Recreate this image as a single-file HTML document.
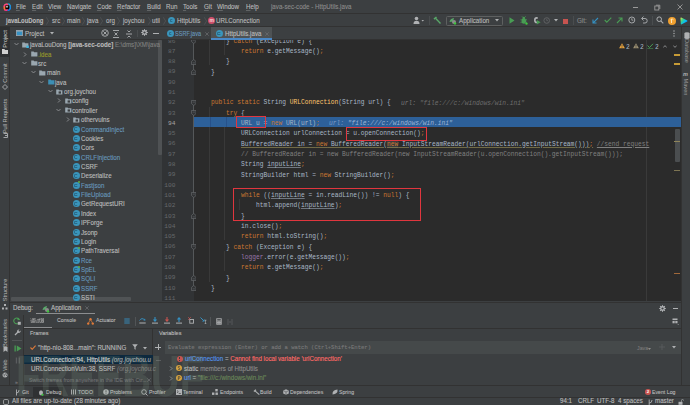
<!DOCTYPE html>
<html><head><meta charset="utf-8">
<style>
*{margin:0;padding:0;box-sizing:border-box}
html,body{width:690px;height:405px;overflow:hidden;background:#3c3f41;font-family:"Liberation Sans",sans-serif;color:#bbbbbb;font-size:6.2px}
.a{position:absolute;white-space:nowrap}
.mono{font-family:"Liberation Mono",monospace}
#menubar{left:0;top:0;width:690px;height:13px;background:#3c3f41}
#navbar{left:0;top:13px;width:690px;height:14px;background:#3c3f41;border-top:1px solid #323232;border-bottom:1px solid #323232}
#lstrip{left:0;top:27px;width:10px;height:358px;background:#3c3f41;border-right:1px solid #323232}
#proj{left:10px;top:27px;width:152px;height:275px;background:#3c3f41;overflow:hidden}
#tabs{left:162px;top:27px;width:519px;height:12.8px;background:#3c3f41;border-bottom:0.8px solid #323232;z-index:3}
#gutter{left:162px;top:39px;width:32px;height:262px;background:#313335}
#code{left:194px;top:39px;width:487px;height:262px;background:#2b2b2b;overflow:hidden}
#rstrip{left:681px;top:27px;width:9px;height:358px;background:#3c3f41;border-left:1px solid #323232}
#debug{left:10px;top:302px;width:671px;height:83px;background:#3c3f41;border-top:1px solid #323232}
#btools{left:0;top:385px;width:690px;height:12px;background:#3c3f41;border-top:1px solid #323232}
#status{left:0;top:397px;width:690px;height:8px;background:#3c3f41;border-top:1px solid #323232}
.mi{top:3px;line-height:7px;font-size:6.8px;transform:scaleX(0.91);transform-origin:0 0;-webkit-text-stroke:0.1px currentColor}
.nb{top:2.5px;line-height:7px;font-size:6.8px;transform:scaleX(0.91);transform-origin:0 0;-webkit-text-stroke:0.1px currentColor}
.nbs{top:2.5px;line-height:7px;color:#5e6060;font-size:6px}
.cicon{width:7px;height:7px;border-radius:50%;background:#3a95bb}
.cicon::after{content:"";position:absolute;left:1.8px;top:1.8px;width:3.4px;height:3.4px;border-radius:50%;border:0.7px solid #2a6a88;border-right-color:transparent;box-sizing:border-box}
u{text-decoration:underline;text-decoration-color:rgba(187,187,187,0.3);text-decoration-thickness:0.5px;text-underline-offset:0.5px}
.vt{display:flex;align-items:center;justify-content:center}
.vt span{display:block;transform:rotate(-90deg);font-size:5.6px;line-height:6px}
.tb{line-height:7px;font-size:6.2px;transform:scaleX(0.84);transform-origin:0 0;color:#bbbbbb;-webkit-text-stroke:0.1px currentColor}
.tr{line-height:7px;font-size:6.8px;transform:scaleX(0.91);transform-origin:0 0;-webkit-text-stroke:0.12px currentColor}
.code{font-family:"Liberation Mono",monospace;font-size:7px;line-height:10.3px;color:#a9b7c6;white-space:pre;transform:scaleX(0.8917);transform-origin:0 0;margin-top:1.2px}
.ln{font-family:"Liberation Mono",monospace;font-size:6.2px;line-height:7px;text-align:right;margin-top:1.4px}
.ul{text-decoration:underline;text-decoration-color:rgba(169,183,198,0.55);text-decoration-thickness:0.5px;text-underline-offset:1px}
.wu{text-decoration:underline;text-decoration-color:rgba(160,150,90,0.6);text-decoration-thickness:0.5px;text-underline-offset:1px}
.cu{text-decoration:underline;text-decoration-thickness:0.6px;text-underline-offset:1px}
.inl{font-style:italic}
.vt.r span{transform:rotate(90deg)}
</style></head>
<body>
<!-- MENUBAR -->
<div class="a" id="menubar">
 <svg class="a" style="left:3px;top:2.6px" width="8.2" height="8.2" viewBox="0 0 8 8"><defs><linearGradient id="ijl" x1="0" y1="0" x2="0.3" y2="1"><stop offset="0" stop-color="#f7e04a"/><stop offset="0.3" stop-color="#ff318c"/><stop offset="0.65" stop-color="#fc801d"/><stop offset="1" stop-color="#ff318c"/></linearGradient><linearGradient id="ijr" x1="0" y1="0" x2="0" y2="1"><stop offset="0" stop-color="#21a8e0"/><stop offset="1" stop-color="#087cfa"/></linearGradient></defs>
<path d="M4,0.3 L6.3,0.6 L7.7,2.3 L7.8,5.8 L6.2,7.6 L3.8,7.8 L5,6.5 L6.6,5.2 L6.5,2.8 L5.2,1.5Z" fill="url(#ijr)"/>
<path d="M4,0.3 L1.6,0.9 L0.3,3 L0.6,5.5 L1.4,7.5 L3.8,7.8 L5,6.5 L5.2,1.5Z" fill="url(#ijl)"/>
<rect x="2.3" y="2.3" width="3.6" height="3.8" fill="#000"/><rect x="2.8" y="2.9" width="2.2" height="0.6" fill="#ddd"/><rect x="3.5" y="2.9" width="0.8" height="2" fill="#ddd"/></svg>
 <div class="a mi" style="left:16px"><u>F</u>ile</div>
 <div class="a mi" style="left:32px"><u>E</u>dit</div>
 <div class="a mi" style="left:48px"><u>V</u>iew</div>
 <div class="a mi" style="left:67px"><u>N</u>avigate</div>
 <div class="a mi" style="left:97px"><u>C</u>ode</div>
 <div class="a mi" style="left:117px"><u>R</u>efactor</div>
 <div class="a mi" style="left:147px"><u>B</u>uild</div>
 <div class="a mi" style="left:166px">R<u>u</u>n</div>
 <div class="a mi" style="left:183px"><u>T</u>ools</div>
 <div class="a mi" style="left:204px"><u>G</u>it</div>
 <div class="a mi" style="left:217px"><u>W</u>indow</div>
 <div class="a mi" style="left:246px"><u>H</u>elp</div>
 <div class="a mi" style="left:271px;color:#8c8c8c">java-sec-code - HttpUtils.java</div>
 <div class="a" style="left:633px;top:6.5px;width:5px;height:1px;background:#9a9a9a"></div>
 <svg class="a" style="left:654px;top:4px" width="7" height="7" viewBox="0 0 7 7"><rect x="0.8" y="2" width="4" height="4" fill="none" stroke="#9a9a9a" stroke-width="0.9"/><path d="M2,1.2 H5.8 V5" fill="none" stroke="#9a9a9a" stroke-width="0.9"/></svg>
 <svg class="a" style="left:677px;top:4px" width="6" height="6" viewBox="0 0 6 6"><path d="M0.5,0.5 L5.5,5.5 M5.5,0.5 L0.5,5.5" stroke="#9a9a9a" stroke-width="0.9"/></svg>
</div>
<!-- NAVBAR -->
<div class="a" id="navbar">
 <div class="a nb" style="left:5.8px;font-weight:bold;transform:scaleX(0.87)">javaLouDong</div>
 <svg class="a" style="left:45.5px;top:2.5px" width="3" height="8" viewBox="0 0 3 8"><path d="M0.3,0.3 L2.6,4 L0.3,7.7" stroke="#5a5d60" stroke-width="0.6" fill="none"/></svg>
 <div class="a nb" style="left:52px">src</div>
 <svg class="a" style="left:61.5px;top:2.5px" width="3" height="8" viewBox="0 0 3 8"><path d="M0.3,0.3 L2.6,4 L0.3,7.7" stroke="#5a5d60" stroke-width="0.6" fill="none"/></svg>
 <div class="a nb" style="left:66.5px">main</div>
 <svg class="a" style="left:81.5px;top:2.5px" width="3" height="8" viewBox="0 0 3 8"><path d="M0.3,0.3 L2.6,4 L0.3,7.7" stroke="#5a5d60" stroke-width="0.6" fill="none"/></svg>
 <div class="a nb" style="left:87.4px">java</div>
 <svg class="a" style="left:100.2px;top:2.5px" width="3" height="8" viewBox="0 0 3 8"><path d="M0.3,0.3 L2.6,4 L0.3,7.7" stroke="#5a5d60" stroke-width="0.6" fill="none"/></svg>
 <div class="a nb" style="left:105.7px">org</div>
 <svg class="a" style="left:117.2px;top:2.5px" width="3" height="8" viewBox="0 0 3 8"><path d="M0.3,0.3 L2.6,4 L0.3,7.7" stroke="#5a5d60" stroke-width="0.6" fill="none"/></svg>
 <div class="a nb" style="left:122.7px">joychou</div>
 <svg class="a" style="left:147.5px;top:2.5px" width="3" height="8" viewBox="0 0 3 8"><path d="M0.3,0.3 L2.6,4 L0.3,7.7" stroke="#5a5d60" stroke-width="0.6" fill="none"/></svg>
 <div class="a nb" style="left:152.3px">util</div>
 <svg class="a" style="left:163.3px;top:2.5px" width="3" height="8" viewBox="0 0 3 8"><path d="M0.3,0.3 L2.6,4 L0.3,7.7" stroke="#5a5d60" stroke-width="0.6" fill="none"/></svg>
 <div class="a cicon" style="left:168px;top:3px"></div>
 <div class="a nb" style="left:176.5px">HttpUtils</div>
 <svg class="a" style="left:203.5px;top:2.5px" width="3" height="8" viewBox="0 0 3 8"><path d="M0.3,0.3 L2.6,4 L0.3,7.7" stroke="#5a5d60" stroke-width="0.6" fill="none"/></svg>
 <div class="a" style="left:208px;top:3px;width:7px;height:7px;border-radius:50%;background:#d0506a"></div><div class="a" style="left:209.4px;top:2.6px;font-size:5px;line-height:7px;color:#f4d8de;font-weight:bold">m</div>
 <div class="a nb" style="left:216px">URLConnection</div>
 <!-- toolbar -->
 <svg class="a" style="left:413px;top:2px" width="12" height="9" viewBox="0 0 12 9"><circle cx="3.5" cy="2.5" r="1.8" fill="#afb1b3"/><path d="M0.5,8 Q0.5,4.8 3.5,4.8 Q6.5,4.8 6.5,8Z" fill="#afb1b3"/><path d="M8.5,4 L11,4 L9.75,5.5Z" fill="#afb1b3"/></svg>
 <div class="a" style="left:429px;top:2px;width:1px;height:9px;background:#4a4d4f"></div>
 <svg class="a" style="left:433px;top:2px" width="8" height="9" viewBox="0 0 8 9"><path d="M0.5,2.5 L3,0.5 L4,1.5 L1.5,3.8Z" fill="#59a869"/><path d="M2.5,2.2 L7.5,7.5" stroke="#59a869" stroke-width="1.3"/></svg>
 <div class="a" style="left:446px;top:1.5px;width:57px;height:10px;border:1px solid #5e6060;border-radius:1.5px"></div>
 <svg class="a" style="left:449px;top:3px" width="8" height="8" viewBox="0 0 8 8"><path d="M0.5,5 Q1,1.5 5,1 L4,4.5Z" fill="#59a869"/><circle cx="5" cy="5" r="2" fill="#8c8c8c"/><circle cx="6" cy="6.4" r="1.2" fill="#3ec63e"/></svg>
 <div class="a nb" style="left:459px">Application</div>
 <svg class="a" style="left:495px;top:5px" width="4" height="3" viewBox="0 0 4 3"><path d="M0,0 H4 L2,2.5Z" fill="#afb1b3"/></svg>
 <svg class="a" style="left:509px;top:3px" width="6" height="7" viewBox="0 0 6 7"><path d="M0.5,0.3 L5.5,3.5 L0.5,6.7Z" fill="#499c54"/></svg>
 <svg class="a" style="left:520px;top:2.3px" width="8" height="9" viewBox="0 0 8 9"><ellipse cx="3.8" cy="5" rx="2.3" ry="2.8" fill="#499c54"/><circle cx="3.8" cy="2" r="1.3" fill="#499c54"/><path d="M0.5,3.8 H1.8 M5.8,3.8 H7 M0.5,6.3 H1.8 M5.8,6.3 H7 M2,0.4 L2.8,1.3 M5.6,0.4 L4.8,1.3" stroke="#499c54" stroke-width="0.8"/><circle cx="6.5" cy="7.6" r="1.2" fill="#3ec63e"/></svg>
 <svg class="a" style="left:533px;top:2px" width="8" height="9" viewBox="0 0 8 9"><path d="M4.8,1.2 Q1,0.5 1,4.2 Q1,7.8 4.8,7.2 L4.8,5.6 Q2.6,6 2.6,4.2 Q2.6,2.4 4.8,2.8Z" fill="#afb1b3"/><path d="M3.8,4 L7.6,6.3 L3.8,8.6Z" fill="#499c54"/></svg>
 <svg class="a" style="left:543px;top:2px" width="8" height="9" viewBox="0 0 8 9"><circle cx="3.7" cy="4.5" r="2.8" fill="none" stroke="#5f6163" stroke-width="1"/><path d="M3.7,2.7 V4.6 H5" stroke="#5f6163" stroke-width="0.8" fill="none"/></svg>
 <svg class="a" style="left:554px;top:5px" width="4" height="3" viewBox="0 0 4 3"><path d="M0,0 H4 L2,2.5Z" fill="#afb1b3"/></svg>
 <div class="a" style="left:563.2px;top:4.5px;width:5.1px;height:5.1px;background:#c75450"></div>
 <div class="a" style="left:573px;top:2px;width:1px;height:9px;background:#4a4d4f"></div>
 <div class="a nb" style="left:577px;color:#8c8c8c">Git:</div>
 <svg class="a" style="left:592px;top:2.5px" width="7" height="7" viewBox="0 0 7 7"><path d="M6,1 L1.2,5.8 M1,2.5 V6 H4.5" stroke="#3592c4" stroke-width="1.1" fill="none"/></svg>
 <svg class="a" style="left:604px;top:3px" width="8" height="6" viewBox="0 0 8 6"><path d="M0.7,3 L2.8,5.2 L7.3,0.6" stroke="#499c54" stroke-width="1.1" fill="none"/></svg>
 <svg class="a" style="left:616px;top:2.5px" width="7" height="7" viewBox="0 0 7 7"><path d="M1,6 L5.8,1.2 M2.5,1 H6 V4.5" stroke="#499c54" stroke-width="1.1" fill="none"/></svg>
 <svg class="a" style="left:628px;top:2px" width="8" height="8" viewBox="0 0 8 8"><circle cx="3.8" cy="4" r="3" fill="none" stroke="#afb1b3" stroke-width="0.9"/><path d="M3.8,2.2 V4.2 H5.3" stroke="#afb1b3" stroke-width="0.8" fill="none"/></svg>
 <svg class="a" style="left:641px;top:2px" width="7" height="8" viewBox="0 0 7 8"><path d="M1,2.5 H4 Q6.2,2.5 6.2,4.8 Q6.2,7 4,7 H2" stroke="#afb1b3" stroke-width="0.9" fill="none"/><path d="M2.5,0.5 L0.5,2.5 L2.5,4.5" stroke="#afb1b3" stroke-width="0.9" fill="none"/></svg>
 <div class="a" style="left:652px;top:2px;width:1px;height:9px;background:#4a4d4f"></div>
 <svg class="a" style="left:656px;top:2px" width="8" height="8" viewBox="0 0 8 8"><circle cx="3.2" cy="3.2" r="2.3" fill="none" stroke="#afb1b3" stroke-width="1"/><path d="M4.8,4.8 L7.3,7.3" stroke="#afb1b3" stroke-width="1.1"/></svg>
 <div class="a" style="left:667.7px;top:2.6px;width:8px;height:8px;border-radius:50%;background:#f0a030"></div>
 <div class="a" style="left:671.2px;top:5px;width:0.9px;height:3.8px;background:#fde5b8"></div>
 <svg class="a" style="left:669.7px;top:4.2px" width="4" height="3" viewBox="0 0 4 3"><path d="M0.5,2.2 L2,0.6 L3.5,2.2" stroke="#fde5b8" stroke-width="0.9" fill="none"/></svg>
 <svg class="a" style="left:679.5px;top:3.3px" width="8" height="8" viewBox="0 0 8 8"><defs><linearGradient id="jb" x1="0" y1="0" x2="1" y2="0.8"><stop offset="0" stop-color="#e9e84a"/><stop offset="0.35" stop-color="#3fd18a"/><stop offset="0.65" stop-color="#07c3f2"/><stop offset="1" stop-color="#087cfa"/></linearGradient></defs><path d="M1.2,0.6 Q0.4,0.4 0.5,1.5 L0.8,6.8 Q0.9,7.6 1.7,7.3 L7.2,4.5 Q7.8,4.1 7.2,3.6Z" fill="url(#jb)"/></svg>
</div>
<!-- LEFT STRIP -->
<div class="a" id="lstrip">
 <div class="a" style="left:0;top:0;width:9.5px;height:30px;background:#2e3032"></div>
 <div class="a vt" style="left:1px;top:4px;width:8px;height:16px;color:#dddddd"><span>Project</span></div>
 <svg class="a" style="left:2px;top:22px" width="6" height="5" viewBox="0 0 6 5"><path d="M0,0 H2.5 L3,1 H6 V5 H0Z" fill="#cfcfcf"/></svg>
 <div class="a vt" style="left:1px;top:37px;width:8px;height:18px"><span>Commit</span></div>
 <svg class="a" style="left:2px;top:57px" width="6" height="6" viewBox="0 0 6 6"><path d="M3,0.5 L5.5,3 L3,5.5 L0.5,3Z" fill="none" stroke="#afb1b3" stroke-width="0.9"/></svg>
 <div class="a vt" style="left:1px;top:73px;width:8px;height:31px"><span>Pull Requests</span></div>
 <svg class="a" style="left:2.5px;top:106px" width="5" height="5" viewBox="0 0 5 5"><path d="M0.5,0.5 H4.5 V4.5 H0.5 M2,2.5 H4.5" fill="none" stroke="#afb1b3" stroke-width="0.9"/></svg>
 <div class="a vt" style="left:1px;top:252px;width:8px;height:22px"><span>Structure</span></div>
 <svg class="a" style="left:2px;top:277px" width="6" height="6" viewBox="0 0 6 6"><rect x="2" y="0" width="2" height="2" fill="#afb1b3"/><rect x="0" y="3.5" width="2" height="2" fill="#afb1b3"/><rect x="3.5" y="3.5" width="2" height="2" fill="#afb1b3"/></svg>
 <div class="a vt" style="left:1px;top:294px;width:8px;height:24px"><span>Bookmarks</span></div>
 <svg class="a" style="left:2.5px;top:320px" width="5" height="5" viewBox="0 0 5 5"><path d="M0.5,0 H4.5 V5 L2.5,3.5 L0.5,5Z" fill="#afb1b3"/></svg>
 <div class="a vt" style="left:1px;top:333px;width:8px;height:10px"><span>Web</span></div>
 <svg class="a" style="left:2px;top:345px" width="6" height="6" viewBox="0 0 6 6"><circle cx="3" cy="3" r="2.5" fill="#afb1b3"/><path d="M1.5,1.5 Q3,3 2,4.5 M4,1 Q3.5,3 4.8,4" stroke="#3c3f41" stroke-width="0.7" fill="none"/></svg>
</div>
<!-- PROJECT PANEL -->
<div class="a" id="proj">
 <div class="a" style="left:0;top:0;width:152px;height:12.5px;border-bottom:1px solid #323232"></div>
 <svg class="a" style="left:6px;top:3px" width="7" height="6" viewBox="0 0 7 6"><rect x="0.4" y="0.4" width="6.2" height="5.2" fill="#3592c4" stroke="#9aa7b0" stroke-width="0.8"/><rect x="0.4" y="0.4" width="6.2" height="1.2" fill="#9aa7b0"/></svg>
 <div class="a tr" style="left:15px;top:2.7px">Project</div>
 <svg class="a" style="left:40px;top:5px" width="4" height="3" viewBox="0 0 4 3"><path d="M0,0 H4 L2,2.5Z" fill="#afb1b3"/></svg>
 <svg class="a" style="left:90.5px;top:2.2px" width="8" height="8" viewBox="0 0 8 8"><circle cx="4" cy="4" r="3.3" fill="none" stroke="#afb1b3" stroke-width="0.9"/><path d="M2.3,2.3 L5.7,5.7 M5.7,2.3 L2.3,5.7" stroke="#afb1b3" stroke-width="0.9"/></svg>
 <svg class="a" style="left:103px;top:2.5px" width="6" height="8" viewBox="0 0 6 8"><path d="M0,0.5 H6 M0,7.5 H6 M1.5,2.5 L3,4 L4.5,2.5 M1.5,5.5 L3,4 L4.5,5.5" stroke="#afb1b3" stroke-width="0.9" fill="none"/></svg>
 <svg class="a" style="left:116px;top:2.5px" width="6" height="8" viewBox="0 0 6 8"><path d="M0,4 H6 M1.5,0.5 L3,2 L4.5,0.5 M1.5,7.5 L3,6 L4.5,7.5" stroke="#afb1b3" stroke-width="0.9" fill="none"/></svg>
 <div class="a" style="left:127px;top:3px;width:1px;height:7px;background:#4a4d4f"></div>
 <svg class="a" style="left:131px;top:2.3px" width="7" height="7" viewBox="0 0 7 7"><g fill="#afb1b3"><circle cx="3.5" cy="3.5" r="2.4"/><rect x="3" y="0.2" width="1" height="6.6"/><rect x="0.2" y="3" width="6.6" height="1"/><rect x="3" y="0.2" width="1" height="6.6" transform="rotate(45 3.5 3.5)"/><rect x="3" y="0.2" width="1" height="6.6" transform="rotate(-45 3.5 3.5)"/></g><circle cx="3.5" cy="3.5" r="1.1" fill="#3c3f41"/></svg>
 <div class="a" style="left:143px;top:6px;width:6px;height:1px;background:#afb1b3"></div>
 <div class="a" style="left:148px;top:13px;width:4px;height:115px;background:#4f5254;border-radius:1px"></div>
 <div class="a" style="left:1px;top:269.5px;width:120px;height:4px;background:#505355;border-radius:1px"></div>

 <svg class="a" style="left:3.5px;top:15.30px" width="5" height="4" viewBox="0 0 5 4"><path d="M0.5,1 L2.5,3 L4.5,1" stroke="#9a9da0" stroke-width="0.8" fill="none"/></svg>
 <svg class="a" style="left:12.0px;top:14.70px" width="7" height="6" viewBox="0 0 7 6"><path d="M0.2,0.5 H2.6 L3.2,1.3 H6.4 V5.6 H0.2Z" fill="#9aa7b0"/><rect x="4.4" y="3.6" width="2.4" height="2.4" fill="#40b6e0"/></svg>
 <div class="a tr" style="left:19.5px;top:14.20px;color:#bbbbbb">javaLouDong <b>[java-sec-code]</b> <span style="color:#7f7f7f">E:\dms]\XM\java</span></div>
 <svg class="a" style="left:13.3px;top:24.57px" width="4" height="5" viewBox="0 0 4 5"><path d="M1,0.5 L3,2.5 L1,4.5" stroke="#9a9da0" stroke-width="0.8" fill="none"/></svg>
 <svg class="a" style="left:20.5px;top:24.07px" width="7" height="6" viewBox="0 0 7 6"><path d="M0.2,0.5 H2.6 L3.2,1.3 H6.4 V5.6 H0.2Z" fill="#9aa7b0"/></svg>
 <div class="a tr" style="left:28.0px;top:23.57px;color:#9a9a2c">.idea</div>
 <svg class="a" style="left:12.0px;top:34.04px" width="5" height="4" viewBox="0 0 5 4"><path d="M0.5,1 L2.5,3 L4.5,1" stroke="#9a9da0" stroke-width="0.8" fill="none"/></svg>
 <svg class="a" style="left:20.5px;top:33.44px" width="7" height="6" viewBox="0 0 7 6"><path d="M0.2,0.5 H2.6 L3.2,1.3 H6.4 V5.6 H0.2Z" fill="#9aa7b0"/></svg>
 <div class="a tr" style="left:28.0px;top:32.94px;color:#bbbbbb">src</div>
 <svg class="a" style="left:20.5px;top:43.41px" width="5" height="4" viewBox="0 0 5 4"><path d="M0.5,1 L2.5,3 L4.5,1" stroke="#9a9da0" stroke-width="0.8" fill="none"/></svg>
 <svg class="a" style="left:29.0px;top:42.81px" width="7" height="6" viewBox="0 0 7 6"><path d="M0.2,0.5 H2.6 L3.2,1.3 H6.4 V5.6 H0.2Z" fill="#9aa7b0"/></svg>
 <div class="a tr" style="left:36.5px;top:42.31px;color:#bbbbbb">main</div>
 <svg class="a" style="left:29.0px;top:52.78px" width="5" height="4" viewBox="0 0 5 4"><path d="M0.5,1 L2.5,3 L4.5,1" stroke="#9a9da0" stroke-width="0.8" fill="none"/></svg>
 <svg class="a" style="left:37.5px;top:52.18px" width="7" height="6" viewBox="0 0 7 6"><path d="M0.2,0.5 H2.6 L3.2,1.3 H6.4 V5.6 H0.2Z" fill="#3d8fb5"/></svg>
 <div class="a tr" style="left:45.0px;top:51.68px;color:#bbbbbb">java</div>
 <svg class="a" style="left:37.5px;top:62.15px" width="5" height="4" viewBox="0 0 5 4"><path d="M0.5,1 L2.5,3 L4.5,1" stroke="#9a9da0" stroke-width="0.8" fill="none"/></svg>
 <svg class="a" style="left:46.0px;top:61.55px" width="7" height="6" viewBox="0 0 7 6"><path d="M0.2,0.5 H2.6 L3.2,1.3 H6.4 V5.6 H0.2Z" fill="#9aa7b0"/><rect x="2.6" y="2.4" width="2.4" height="2.2" fill="#3c3f41"/></svg>
 <div class="a tr" style="left:53.5px;top:61.05px;color:#bbbbbb">org.joychou</div>
 <svg class="a" style="left:47.3px;top:71.42px" width="4" height="5" viewBox="0 0 4 5"><path d="M1,0.5 L3,2.5 L1,4.5" stroke="#9a9da0" stroke-width="0.8" fill="none"/></svg>
 <svg class="a" style="left:54.5px;top:70.92px" width="7" height="6" viewBox="0 0 7 6"><path d="M0.2,0.5 H2.6 L3.2,1.3 H6.4 V5.6 H0.2Z" fill="#9aa7b0"/><rect x="2.6" y="2.4" width="2.4" height="2.2" fill="#3c3f41"/></svg>
 <div class="a tr" style="left:62.0px;top:70.42px;color:#bbbbbb">config</div>
 <svg class="a" style="left:46.0px;top:80.89px" width="5" height="4" viewBox="0 0 5 4"><path d="M0.5,1 L2.5,3 L4.5,1" stroke="#9a9da0" stroke-width="0.8" fill="none"/></svg>
 <svg class="a" style="left:54.5px;top:80.29px" width="7" height="6" viewBox="0 0 7 6"><path d="M0.2,0.5 H2.6 L3.2,1.3 H6.4 V5.6 H0.2Z" fill="#9aa7b0"/><rect x="2.6" y="2.4" width="2.4" height="2.2" fill="#3c3f41"/></svg>
 <div class="a tr" style="left:62.0px;top:79.79px;color:#bbbbbb">controller</div>
 <svg class="a" style="left:55.8px;top:90.16px" width="4" height="5" viewBox="0 0 4 5"><path d="M1,0.5 L3,2.5 L1,4.5" stroke="#9a9da0" stroke-width="0.8" fill="none"/></svg>
 <svg class="a" style="left:63.0px;top:89.66px" width="7" height="6" viewBox="0 0 7 6"><path d="M0.2,0.5 H2.6 L3.2,1.3 H6.4 V5.6 H0.2Z" fill="#9aa7b0"/><rect x="2.6" y="2.4" width="2.4" height="2.2" fill="#3c3f41"/></svg>
 <div class="a tr" style="left:70.5px;top:89.16px;color:#bbbbbb">othervulns</div>
 <div class="a cicon" style="left:62.5px;top:98.53px"></div>
 <div class="a tr" style="left:70.5px;top:98.53px;color:#6897bb">CommandInject</div>
 <div class="a cicon" style="left:62.5px;top:107.90px"></div>
 <div class="a tr" style="left:70.5px;top:107.90px;color:#bbbbbb">Cookies</div>
 <div class="a cicon" style="left:62.5px;top:117.27px"></div>
 <div class="a tr" style="left:70.5px;top:117.27px;color:#bbbbbb">Cors</div>
 <div class="a cicon" style="left:62.5px;top:126.64px"></div>
 <div class="a tr" style="left:70.5px;top:126.64px;color:#6897bb">CRLFInjection</div>
 <div class="a cicon" style="left:62.5px;top:136.01px"></div>
 <div class="a tr" style="left:70.5px;top:136.01px;color:#bbbbbb">CSRF</div>
 <div class="a cicon" style="left:62.5px;top:145.38px"></div>
 <div class="a tr" style="left:70.5px;top:145.38px;color:#bbbbbb">Deserialize</div>
 <div class="a cicon" style="left:62.5px;top:154.75px"></div>
 <div class="a" style="left:67.5px;top:154.45px;width:2px;height:2px;background:#62b543;border-radius:50%"></div>
 <div class="a tr" style="left:70.5px;top:154.75px;color:#6897bb">Fastjson</div>
 <div class="a cicon" style="left:62.5px;top:164.12px"></div>
 <div class="a tr" style="left:70.5px;top:164.12px;color:#6897bb">FileUpload</div>
 <div class="a cicon" style="left:62.5px;top:173.49px"></div>
 <div class="a tr" style="left:70.5px;top:173.49px;color:#bbbbbb">GetRequestURI</div>
 <div class="a cicon" style="left:62.5px;top:182.86px"></div>
 <div class="a tr" style="left:70.5px;top:182.86px;color:#bbbbbb">Index</div>
 <div class="a cicon" style="left:62.5px;top:192.23px"></div>
 <div class="a tr" style="left:70.5px;top:192.23px;color:#bbbbbb">IPForge</div>
 <div class="a cicon" style="left:62.5px;top:201.60px"></div>
 <div class="a tr" style="left:70.5px;top:201.60px;color:#bbbbbb">Jsonp</div>
 <div class="a cicon" style="left:62.5px;top:210.97px"></div>
 <div class="a tr" style="left:70.5px;top:210.97px;color:#bbbbbb">Login</div>
 <div class="a cicon" style="left:62.5px;top:220.34px"></div>
 <div class="a" style="left:67.5px;top:220.04px;width:2px;height:2px;background:#62b543;border-radius:50%"></div>
 <div class="a tr" style="left:70.5px;top:220.34px;color:#bbbbbb">PathTraversal</div>
 <div class="a cicon" style="left:62.5px;top:229.71px"></div>
 <div class="a tr" style="left:70.5px;top:229.71px;color:#6897bb">Rce</div>
 <div class="a cicon" style="left:62.5px;top:239.08px"></div>
 <div class="a" style="left:67.5px;top:238.78px;width:2px;height:2px;background:#62b543;border-radius:50%"></div>
 <div class="a tr" style="left:70.5px;top:239.08px;color:#6897bb">SpEL</div>
 <div class="a cicon" style="left:62.5px;top:248.45px"></div>
 <div class="a tr" style="left:70.5px;top:248.45px;color:#6897bb">SQLI</div>
 <div class="a cicon" style="left:62.5px;top:257.82px"></div>
 <div class="a tr" style="left:70.5px;top:257.82px;color:#6897bb">SSRF</div>
 <div class="a cicon" style="left:62.5px;top:267.19px"></div>
 <div class="a tr" style="left:70.5px;top:267.19px;color:#bbbbbb">SSTI</div>
</div>
<!-- EDITOR TABS -->
<div class="a" id="tabs">
 <div class="a cicon" style="left:5.0px;top:2.8px"></div>
 <div class="a tr" style="left:13.3px;top:2.8px;color:#6897bb;transform:scaleX(0.82)">SSRF.java</div>
 <svg class="a" style="left:43.0px;top:4.5px" width="4" height="4" viewBox="0 0 4 4"><path d="M0.3,0.3 L3.7,3.7 M3.7,0.3 L0.3,3.7" stroke="#6e7072" stroke-width="0.7"/></svg>
 <div class="a" style="left:49.3px;top:0;width:61px;height:12px;background:#4e5254"></div>
 <div class="a" style="left:49.3px;top:11.2px;width:61px;height:1.7px;background:#4a88c7"></div>
 <div class="a cicon" style="left:53.5px;top:2.8px"></div>
 <div class="a tr" style="left:62.7px;top:2.8px;color:#bbbbbb">HttpUtils.java</div>
 <svg class="a" style="left:103.0px;top:4.5px" width="4" height="4" viewBox="0 0 4 4"><path d="M0.3,0.3 L3.7,3.7 M3.7,0.3 L0.3,3.7" stroke="#6e7072" stroke-width="0.7"/></svg>
 <svg class="a" style="left:510.5px;top:2.5px" width="2" height="7" viewBox="0 0 2 7"><circle cx="1" cy="1" r="0.7" fill="#afb1b3"/><circle cx="1" cy="3.5" r="0.7" fill="#afb1b3"/><circle cx="1" cy="6" r="0.7" fill="#afb1b3"/></svg>
</div>
<!-- GUTTER -->
<div class="a" id="gutter">
 <div class="a ln" style="left:0;width:13.5px;top:-2.90px;color:#66696c">86</div>
 <div class="a ln" style="left:0;width:13.5px;top:7.40px;color:#66696c">87</div>
 <div class="a ln" style="left:0;width:13.5px;top:17.70px;color:#66696c">88</div>
 <div class="a ln" style="left:0;width:13.5px;top:28.00px;color:#66696c">89</div>
 <div class="a ln" style="left:0;width:13.5px;top:38.30px;color:#66696c">90</div>
 <div class="a ln" style="left:0;width:13.5px;top:48.60px;color:#66696c">91</div>
 <div class="a ln" style="left:0;width:13.5px;top:58.90px;color:#66696c">92</div>
 <div class="a ln" style="left:0;width:13.5px;top:69.20px;color:#66696c">93</div>
 <div class="a ln" style="left:0;width:13.5px;top:79.50px;color:#a4a3a3">94</div>
 <div class="a ln" style="left:0;width:13.5px;top:89.80px;color:#66696c">95</div>
 <div class="a ln" style="left:0;width:13.5px;top:100.10px;color:#66696c">96</div>
 <div class="a ln" style="left:0;width:13.5px;top:110.40px;color:#66696c">97</div>
 <div class="a ln" style="left:0;width:13.5px;top:120.70px;color:#66696c">98</div>
 <div class="a ln" style="left:0;width:13.5px;top:131.00px;color:#66696c">99</div>
 <div class="a ln" style="left:0;width:13.5px;top:141.30px;color:#66696c">100</div>
 <div class="a ln" style="left:0;width:13.5px;top:151.60px;color:#66696c">101</div>
 <div class="a ln" style="left:0;width:13.5px;top:161.90px;color:#66696c">102</div>
 <div class="a ln" style="left:0;width:13.5px;top:172.20px;color:#66696c">103</div>
 <div class="a ln" style="left:0;width:13.5px;top:182.50px;color:#66696c">104</div>
 <div class="a ln" style="left:0;width:13.5px;top:192.80px;color:#66696c">105</div>
 <div class="a ln" style="left:0;width:13.5px;top:203.10px;color:#66696c">106</div>
 <div class="a ln" style="left:0;width:13.5px;top:213.40px;color:#66696c">107</div>
 <div class="a ln" style="left:0;width:13.5px;top:223.70px;color:#66696c">108</div>
 <div class="a ln" style="left:0;width:13.5px;top:234.00px;color:#66696c">109</div>
 <div class="a ln" style="left:0;width:13.5px;top:244.30px;color:#66696c">110</div>
 <div class="a ln" style="left:0;width:13.5px;top:254.60px;color:#66696c">111</div>
</div>
<!-- CODE -->
<div class="a" id="code">
 <div class="a" style="left:451.5px;top:0;width:0.7px;height:262px;background:#3a3a3a"></div>
 <div class="a" style="left:15px;top:-4.55px;width:0.6px;height:30.90px;background:#393939"></div>
 <div class="a" style="left:30px;top:-4.55px;width:0.6px;height:20.60px;background:#393939"></div>
 <div class="a" style="left:30px;top:77.85px;width:0.6px;height:123.60px;background:#393939"></div>
 <div class="a" style="left:15px;top:67.55px;width:0.6px;height:175.10px;background:#393939"></div>
 <div class="a" style="left:30px;top:211.75px;width:0.6px;height:20.60px;background:#393939"></div>
 <div class="a" style="left:45px;top:160.25px;width:0.6px;height:10.30px;background:#393939"></div>
 <div class="a" style="left:-1px;top:77.85px;width:488px;height:10.3px;background:#2d6099"></div>
 <div class="a" style="left:16.3px;top:77.85px;width:0.7px;height:10.3px;background:#27518a"></div>
 <div class="a" style="left:31.5px;top:77.85px;width:0.7px;height:10.3px;background:#27518a"></div>
 <div class="a code" style="left:17px;top:-4.55px">    } <span style="color:#cc7832">catch</span> (Exception e) {</div>
 <div class="a code" style="left:17px;top:5.75px">        <span style="color:#cc7832">return</span> e.getMessage()<span style="color:#cc7832">;</span></div>
 <div class="a code" style="left:17px;top:16.05px">    }</div>
 <div class="a code" style="left:17px;top:26.35px">}</div>
 <div class="a code" style="left:17px;top:36.65px"></div>
 <div class="a code" style="left:17px;top:46.95px"></div>
 <div class="a code" style="left:17px;top:57.25px"><span style="color:#cc7832">public static</span> String <span style="color:#ffc66d">URLConnection</span>(String url) {</div>
 <div class="a code" style="left:17px;top:67.55px">    <span style="color:#cc7832">try</span> {</div>
 <div class="a code" style="left:17px;top:77.85px">        URL u = <span style="color:#cc7832">new</span> URL(url)<span style="color:#cc7832">;</span></div>
 <div class="a code" style="left:17px;top:88.15px">        URLConnection urlConnection = u.openConnection()<span style="color:#cc7832">;</span></div>
 <div class="a code" style="left:17px;top:98.45px">        <span class="wu">BufferedReader in = <span style="color:#cc7832">new</span> BufferedReader(<span style="background:#3b3d3f"><span style="color:#cc7832">new</span></span> InputStreamReader(urlConnection.getInputStream()))<span style="color:#cc7832">;</span></span> <span class="cu" style="color:#808080">//send request</span></div>
 <div class="a code" style="left:17px;top:108.75px">        <span style="color:#808080">// BufferedReader in = new BufferedReader(new InputStreamReader(u.openConnection().getInputStream()));</span></div>
 <div class="a code" style="left:17px;top:119.05px">        String <span class="ul">inputLine</span><span style="color:#cc7832">;</span></div>
 <div class="a code" style="left:17px;top:129.35px">        StringBuilder html = <span style="color:#cc7832">new</span> StringBuilder()<span style="color:#cc7832">;</span></div>
 <div class="a code" style="left:17px;top:139.65px"></div>
 <div class="a code" style="left:17px;top:149.95px">        <span style="color:#cc7832">while</span> ((<span class="ul">inputLine</span> = in.readLine()) != <span style="color:#cc7832">null</span>) {</div>
 <div class="a code" style="left:17px;top:160.25px">            html.append(<span class="ul">inputLine</span>)<span style="color:#cc7832">;</span></div>
 <div class="a code" style="left:17px;top:170.55px">        }</div>
 <div class="a code" style="left:17px;top:180.85px">        in.close()<span style="color:#cc7832">;</span></div>
 <div class="a code" style="left:17px;top:191.15px">        <span style="color:#cc7832">return</span> html.toString()<span style="color:#cc7832">;</span></div>
 <div class="a code" style="left:17px;top:201.45px">    } <span style="color:#cc7832">catch</span> (Exception e) {</div>
 <div class="a code" style="left:17px;top:211.75px">        <span style="color:#9876aa">logger</span>.error(e.getMessage())<span style="color:#cc7832">;</span></div>
 <div class="a code" style="left:17px;top:222.05px">        <span style="color:#cc7832">return</span> e.getMessage()<span style="color:#cc7832">;</span></div>
 <div class="a code" style="left:17px;top:232.35px">    }</div>
 <div class="a code" style="left:17px;top:242.65px">}</div>
 <div class="a code" style="left:17px;top:252.95px"></div>
 <div class="a code inl" style="left:206.5px;top:58.25px"><span style="color:#787878">url: </span><span style="color:#6e6e6e">"file:///c:/windows/win.ini"</span></div>
 <div class="a code inl" style="left:134.6px;top:78.25px"><span style="color:#7f9cc4">url: </span><span style="color:#9db5d8">"file:///c:/windows/win.ini"</span></div>
 <div class="a" style="left:41.8px;top:77.0px;width:30.4px;height:12.0px;border:1.25px solid #e0363e"></div>
 <div class="a" style="left:152.2px;top:87.5px;width:81.3px;height:14.0px;border:1.25px solid #e0363e"></div>
 <div class="a" style="left:39.0px;top:149.4px;width:188.0px;height:33.1px;border:1.25px solid #e0363e"></div>
 <svg class="a" style="left:425px;top:4.3px" width="6" height="5.5" viewBox="0 0 6 5.5"><path d="M3,0.2 L5.9,5.3 H0.1Z" fill="#e8a33e"/><path d="M3,1.8 V3.6 M3,4.2 V4.8" stroke="#2b2b2b" stroke-width="0.7"/></svg>
 <div class="a code" style="left:432px;top:2.3px;color:#a9b7c6">2</div>
 <svg class="a" style="left:439px;top:4.3px" width="6" height="5.5" viewBox="0 0 6 5.5"><path d="M3,0.2 L5.9,5.3 H0.1Z" fill="#9c9072"/><path d="M3,1.8 V3.6 M3,4.2 V4.8" stroke="#2b2b2b" stroke-width="0.7"/></svg>
 <div class="a code" style="left:446px;top:2.3px;color:#a9b7c6">2</div>
 <svg class="a" style="left:453px;top:4px" width="6.5" height="6" viewBox="0 0 6.5 6"><path d="M0.5,2.5 L2.5,4.5 L6,0.8" stroke="#499c54" stroke-width="1" fill="none"/><path d="M0.3,5.6 H6.2" stroke="#499c54" stroke-width="0.6"/></svg>
 <div class="a code" style="left:461px;top:2.3px;color:#a9b7c6">2</div>
 <svg class="a" style="left:469px;top:5.5px" width="4" height="3" viewBox="0 0 4 3"><path d="M0.3,2.5 L2,0.6 L3.7,2.5" stroke="#afb1b3" stroke-width="0.7" fill="none"/></svg>
 <svg class="a" style="left:479px;top:5.5px" width="4" height="3" viewBox="0 0 4 3"><path d="M0.3,0.5 L2,2.4 L3.7,0.5" stroke="#afb1b3" stroke-width="0.7" fill="none"/></svg>
 <div class="a" style="left:481.3px;top:90.4px;width:4.7px;height:33px;background:#4b4e50;border-radius:1px"></div>
 <div class="a" style="left:480px;top:101.8px;width:6px;height:1px;background:#8f8459"></div>
 <div class="a" style="left:480px;top:130.5px;width:6px;height:1px;background:#7d7452"></div>
 <div class="a" style="left:479.5px;top:234.2px;width:6.5px;height:1px;background:#a0683a"></div>
 <div class="a" style="left:480px;top:15.3px;width:6px;height:1.3px;background:#c79b36"></div>
 <div class="a" style="left:480px;top:24.3px;width:6px;height:1.3px;background:#c79b36"></div>
</div>
<div class="a" id="fold" style="left:163px;top:39px;width:40px;height:262px;overflow:hidden">
 <div class="a" style="left:29.7px;top:0;width:0.8px;height:262px;background:transparent"></div>
 <div class="a" style="left:29.95px;top:-5.00px;width:0.7px;height:36.50px;background:#55585a"></div>
 <div class="a" style="left:29.95px;top:62.40px;width:0.7px;height:185.40px;background:#55585a"></div>
 <svg class="a" style="left:27.6px;top:-1.10px" width="5.5" height="6" viewBox="0 0 6 6.5"><path d="M0.5,0.5 H5.5 V3.8 L3,6 L0.5,3.8Z" fill="#313335" stroke="#6b6e70" stroke-width="0.7"/><path d="M1.8,2.3 H4.2" stroke="#6b6e70" stroke-width="0.6"/></svg>
 <svg class="a" style="left:27.6px;top:19.50px" width="5.5" height="6" viewBox="0 0 6 6.5"><path d="M0.5,6 H5.5 V2.7 L3,0.5 L0.5,2.7Z" fill="#313335" stroke="#6b6e70" stroke-width="0.7"/><path d="M1.8,4.2 H4.2" stroke="#6b6e70" stroke-width="0.6"/></svg>
 <svg class="a" style="left:27.6px;top:29.80px" width="5.5" height="6" viewBox="0 0 6 6.5"><path d="M0.5,6 H5.5 V2.7 L3,0.5 L0.5,2.7Z" fill="#313335" stroke="#6b6e70" stroke-width="0.7"/><path d="M1.8,4.2 H4.2" stroke="#6b6e70" stroke-width="0.6"/></svg>
 <svg class="a" style="left:27.6px;top:60.70px" width="5.5" height="6" viewBox="0 0 6 6.5"><path d="M0.5,0.5 H5.5 V3.8 L3,6 L0.5,3.8Z" fill="#313335" stroke="#6b6e70" stroke-width="0.7"/><path d="M1.8,2.3 H4.2" stroke="#6b6e70" stroke-width="0.6"/></svg>
 <svg class="a" style="left:27.6px;top:71.00px" width="5.5" height="6" viewBox="0 0 6 6.5"><path d="M0.5,0.5 H5.5 V3.8 L3,6 L0.5,3.8Z" fill="#313335" stroke="#6b6e70" stroke-width="0.7"/><path d="M1.8,2.3 H4.2" stroke="#6b6e70" stroke-width="0.6"/></svg>
 <svg class="a" style="left:27.6px;top:153.40px" width="5.5" height="6" viewBox="0 0 6 6.5"><path d="M0.5,0.5 H5.5 V3.8 L3,6 L0.5,3.8Z" fill="#313335" stroke="#6b6e70" stroke-width="0.7"/><path d="M1.8,2.3 H4.2" stroke="#6b6e70" stroke-width="0.6"/></svg>
 <svg class="a" style="left:27.6px;top:174.00px" width="5.5" height="6" viewBox="0 0 6 6.5"><path d="M0.5,6 H5.5 V2.7 L3,0.5 L0.5,2.7Z" fill="#313335" stroke="#6b6e70" stroke-width="0.7"/><path d="M1.8,4.2 H4.2" stroke="#6b6e70" stroke-width="0.6"/></svg>
 <svg class="a" style="left:27.6px;top:204.90px" width="5.5" height="6" viewBox="0 0 6 6.5"><path d="M0.5,0.5 H5.5 V3.8 L3,6 L0.5,3.8Z" fill="#313335" stroke="#6b6e70" stroke-width="0.7"/><path d="M1.8,2.3 H4.2" stroke="#6b6e70" stroke-width="0.6"/></svg>
 <svg class="a" style="left:27.6px;top:235.80px" width="5.5" height="6" viewBox="0 0 6 6.5"><path d="M0.5,6 H5.5 V2.7 L3,0.5 L0.5,2.7Z" fill="#313335" stroke="#6b6e70" stroke-width="0.7"/><path d="M1.8,4.2 H4.2" stroke="#6b6e70" stroke-width="0.6"/></svg>
 <svg class="a" style="left:27.6px;top:246.10px" width="5.5" height="6" viewBox="0 0 6 6.5"><path d="M0.5,6 H5.5 V2.7 L3,0.5 L0.5,2.7Z" fill="#313335" stroke="#6b6e70" stroke-width="0.7"/><path d="M1.8,4.2 H4.2" stroke="#6b6e70" stroke-width="0.6"/></svg>
</div>
<!-- RIGHT STRIP -->
<div class="a" id="rstrip">
 <svg class="a" style="left:1.5px;top:4.5px" width="6" height="7" viewBox="0 0 6 7"><ellipse cx="3" cy="1.3" rx="2.6" ry="1.1" fill="#afb1b3"/><rect x="0.4" y="1.3" width="5.2" height="4.6" fill="#afb1b3"/><ellipse cx="3" cy="5.9" rx="2.6" ry="1.1" fill="#afb1b3"/></svg>
 <div class="a vt r" style="left:0;top:13px;width:9px;height:21px;color:#9a9a9a"><span>Database</span></div>
 <div class="a" style="left:1px;top:44px;font-size:5.5px;font-weight:bold;font-style:italic;color:#afb1b3;line-height:6px">m</div>
 <div class="a vt r" style="left:0;top:51px;width:9px;height:18px;color:#9a9a9a"><span>Maven</span></div>
</div>
<!-- DEBUG PANEL -->
<div class="a" id="debug">
 <div class="a tr" style="left:3.0px;top:1.4px;color:#bbbbbb">Debug:</div>
 <svg class="a" style="left:31.5px;top:1.6px" width="8" height="8" viewBox="0 0 8 8"><path d="M0.5,5 Q1,1.5 5,1 L4,4.5Z" fill="#59a869"/><circle cx="5" cy="5" r="2" fill="#8c8c8c"/><circle cx="6" cy="6.4" r="1.2" fill="#3ec63e"/></svg>
 <div class="a tr" style="left:41.0px;top:1.4px;color:#bbbbbb">Application</div>
 <svg class="a" style="left:74.8px;top:2.8px" width="4" height="4" viewBox="0 0 4 4"><path d="M0.3,0.3 L3.7,3.7 M3.7,0.3 L0.3,3.7" stroke="#6e7072" stroke-width="0.7"/></svg>
 <div class="a" style="left:26.0px;top:9.6px;width:59px;height:1.3px;background:#8c8e90"></div>
 <svg class="a" style="left:648.5px;top:2.0px" width="7" height="7" viewBox="0 0 7 7"><g fill="#afb1b3"><circle cx="3.5" cy="3.5" r="2.4"/><rect x="3" y="0.2" width="1" height="6.6"/><rect x="0.2" y="3" width="6.6" height="1"/><rect x="3" y="0.2" width="1" height="6.6" transform="rotate(45 3.5 3.5)"/><rect x="3" y="0.2" width="1" height="6.6" transform="rotate(-45 3.5 3.5)"/></g><circle cx="3.5" cy="3.5" r="1.1" fill="#3c3f41"/></svg>
 <div class="a" style="left:662.5px;top:5.0px;width:5px;height:1px;background:#afb1b3"></div>
 <svg class="a" style="left:661.5px;top:14.5px" width="7" height="7" viewBox="0 0 7 7"><rect x="0.5" y="0.5" width="5" height="1.6" fill="#afb1b3"/><rect x="0.5" y="3" width="2.2" height="2.3" fill="#afb1b3"/><rect x="3.3" y="3" width="2.2" height="2.3" fill="#afb1b3"/><path d="M5.5,6 L6.8,6 L6.15,6.9Z" fill="#afb1b3"/></svg>
 <div class="a" style="left:13.3px;top:12.0px;width:0.8px;height:71px;background:#323232"></div>
 <svg class="a" style="left:3.0px;top:13.5px" width="8" height="8" viewBox="0 0 8 8"><path d="M6.3,3.2 A2.8,2.8 0 1 0 4.8,6.4" stroke="#499c54" stroke-width="1.1" fill="none"/><path d="M4.8,0.3 L7.2,2.5 L4.4,3.2Z" fill="#499c54"/><rect x="4.8" y="4.8" width="3" height="3" fill="#afb1b3"/></svg>
 <svg class="a" style="left:3.5px;top:25.8px" width="7" height="7" viewBox="0 0 7 7"><path d="M1,6 L4,3" stroke="#afb1b3" stroke-width="1.2"/><circle cx="4.8" cy="2.2" r="1.7" fill="#afb1b3"/><circle cx="5.5" cy="1.5" r="0.9" fill="#3c3f41"/></svg>
 <div class="a" style="left:2.0px;top:36.6px;width:10px;height:0.7px;background:#515456"></div>
 <svg class="a" style="left:3.5px;top:41.5px" width="8" height="7" viewBox="0 0 8 7"><rect x="0.5" y="0.5" width="1.3" height="6" fill="#499c54"/><path d="M2.8,0.5 L7.5,3.5 L2.8,6.5Z" fill="#499c54"/></svg>
 <svg class="a" style="left:4.5px;top:53.6px" width="6" height="7" viewBox="0 0 6 7"><rect x="0.8" y="0.5" width="1.3" height="6" fill="#5a5d5f"/><rect x="3.6" y="0.5" width="1.3" height="6" fill="#5a5d5f"/></svg>
 <div class="a" style="left:5.0px;top:75.5px;font-size:5px;color:#8c8c8c;line-height:6px">»</div>
 <svg class="a" style="left:19.8px;top:14.8px" width="14.7" height="5.5" viewBox="0 0 30 11"><g stroke="#b8b8b8" stroke-width="1.1" fill="none">
<path d="M1,1 L2.5,2.2 M0.8,4.5 H2.5 V9.5 L3.8,8.5"/><path d="M4.8,10.5 V1 H9.8 V9.5 Q9.8,10.5 8.8,10.3"/><path d="M5.8,3.3 H8.8 M7.3,2 V5 M6.2,6.2 H8.4 V8.8 H6.2Z"/>
<path d="M11,1 L12.5,2.2 M10.8,4.5 H12.5 V9.5 L13.8,8.5"/><path d="M14.5,3 H20.5 M15,5.5 H18 M16.5,5.5 V9 M14.8,9.5 L18.3,8.5 M18.8,1 Q18.8,8 20.8,10 M20,1.2 L20.8,2"/>
<path d="M22,1 H25 V3.5 H22Z M26.5,1 H29.5 V3.5 H26.5Z M22,7.5 H25 V10.3 H22Z M26.5,7.5 H29.5 V10.3 H26.5Z M21.8,5.5 H29.7 M25.8,3.8 L22.5,7 M25.8,5.5 L29,7 M27.5,4 L28.3,4.6"/>
</g></svg>
 <div class="a" style="left:14.0px;top:23.6px;width:28px;height:1.3px;background:#8c8e90"></div>
 <div class="a tb" style="left:46.6px;top:13.4px">Console</div>
 <svg class="a" style="left:76.5px;top:14.5px" width="7" height="7" viewBox="0 0 7 7"><circle cx="3.5" cy="1.3" r="1.2" fill="#e07b39"/><circle cx="1.2" cy="5.6" r="1.2" fill="#e07b39"/><circle cx="5.8" cy="5.6" r="1.2" fill="#e07b39"/><path d="M3.5,1.3 L1.2,5.6 M3.5,1.3 L5.8,5.6" stroke="#e07b39" stroke-width="0.7"/></svg>
 <div class="a tb" style="left:86.0px;top:13.4px">Actuator</div>
 <svg class="a" style="left:113.5px;top:15.2px" width="6" height="6" viewBox="0 0 6 6"><path d="M0.3,1 H5.7 M0.3,3 H5.7 M0.3,5 H5.7" stroke="#3592c4" stroke-width="0.9"/></svg>
 <div class="a" style="left:124.5px;top:14.0px;width:0.8px;height:9px;background:#515456"></div>
 <svg class="a" style="left:129.0px;top:14.3px" width="7" height="7" viewBox="0 0 7 7"><path d="M0.5,3.5 Q3,0 5.5,3" stroke="#3592c4" stroke-width="0.9" fill="none"/><path d="M4.2,3.2 L6.5,3.5 L6,1.5Z" fill="#3592c4"/><rect x="0.3" y="5.5" width="6.4" height="1" fill="#afb1b3"/></svg>
 <svg class="a" style="left:142.0px;top:14.3px" width="6" height="7" viewBox="0 0 6 7"><path d="M3,0 V3.5" stroke="#3592c4" stroke-width="1.1"/><path d="M0.8,2.5 L3,5 L5.2,2.5Z" fill="#3592c4"/><rect x="0" y="5.6" width="6" height="1" fill="#afb1b3"/></svg>
 <svg class="a" style="left:154.0px;top:14.3px" width="6" height="7" viewBox="0 0 6 7"><path d="M3,0 V3.5" stroke="#c75450" stroke-width="1.1"/><path d="M0.8,2.5 L3,5 L5.2,2.5Z" fill="#c75450"/><rect x="0" y="5.6" width="6" height="1" fill="#afb1b3"/></svg>
 <svg class="a" style="left:166.0px;top:14.3px" width="6" height="7" viewBox="0 0 6 7"><path d="M3,5 V1.5" stroke="#3592c4" stroke-width="1.1"/><path d="M0.8,2.5 L3,0 L5.2,2.5Z" fill="#3592c4"/><rect x="0" y="5.6" width="6" height="1" fill="#afb1b3"/></svg>
 <svg class="a" style="left:178.0px;top:14.3px" width="6" height="7" viewBox="0 0 6 7"><path d="M0.3,0.3 L2.7,2.7 M2.7,0.3 L0.3,2.7" stroke="#c75450" stroke-width="0.9"/><rect x="1.8" y="2.5" width="3.7" height="3.7" fill="none" stroke="#afb1b3" stroke-width="0.9"/></svg>
 <svg class="a" style="left:190.0px;top:14.3px" width="7" height="7" viewBox="0 0 7 7"><path d="M0.5,0.5 L4,4" stroke="#3592c4" stroke-width="1"/><path d="M4.5,2 V4.5 H2Z" fill="#3592c4"/><path d="M5.5,3 V7 M4.5,3.2 H6.5 M4.5,6.7 H6.5" stroke="#afb1b3" stroke-width="0.6"/></svg>
 <div class="a" style="left:200.0px;top:14.0px;width:0.8px;height:9px;background:#515456"></div>
 <svg class="a" style="left:206.0px;top:15.2px" width="6" height="7" viewBox="0 0 6 7"><rect x="0.3" y="0.3" width="5.4" height="6.4" fill="#afb1b3"/><rect x="1.2" y="1.2" width="3.6" height="1.3" fill="#3c3f41"/><path d="M1.3,3.6 H4.7 M1.3,5.3 H4.7" stroke="#3c3f41" stroke-width="0.6" stroke-dasharray="0.8 0.5"/></svg>
 <svg class="a" style="left:217.0px;top:15.5px" width="6" height="6" viewBox="0 0 6 6"><path d="M0,1 H2 M4,1 H6 M0,3 H6 M0,5 H2 M4,5 H6" stroke="#5a5d5f" stroke-width="0.8"/></svg>
 <div class="a" style="left:14.0px;top:25.0px;width:657px;height:0.7px;background:#323232"></div>
 <div class="a tr" style="left:19.9px;top:27.3px;color:#bbbbbb;font-size:6px">Frames</div>
 <div class="a" style="left:142.2px;top:25.0px;width:0.8px;height:58px;background:#323232"></div>
 <svg class="a" style="left:19.5px;top:41.5px" width="6" height="5" viewBox="0 0 6 5"><path d="M0.5,2.5 L2.2,4.3 L5.6,0.6" stroke="#e07b39" stroke-width="1.1" fill="none"/></svg>
 <div class="a tr" style="left:27.5px;top:41.0px;color:#bbbbbb">"http-nio-808...main": RUNNING</div>
 <svg class="a" style="left:121.5px;top:41.3px" width="6" height="6" viewBox="0 0 6 6"><path d="M0.2,0.3 H5.8 L3.6,3 V5.8 L2.4,5 V3Z" fill="#afb1b3"/></svg>
 <svg class="a" style="left:133.0px;top:43.5px" width="4" height="3" viewBox="0 0 4 3"><path d="M0,0 H4 L2,2.5Z" fill="#afb1b3"/></svg>
 <div class="a" style="left:14.0px;top:51.6px;width:128.6px;height:9.8px;background:#0d293e"></div>
 <div class="a tr" style="left:21.0px;top:52.5px;color:#d8d8d8">URLConnection:94, HttpUtils <i style="color:#a8a8a8">(org.joychou.u</i></div>
 <div class="a tr" style="left:21.0px;top:62.0px;color:#bbbbbb">URLConnectionVuln:38, SSRF <i style="color:#7a7a7a">(org.joychou.c</i></div>
 <div class="a tr" style="left:19.0px;top:73.7px;color:#6e7072;font-size:5.8px">Switch frames from anywhere in the IDE with Ctr...</div>
 <svg class="a" style="left:136.5px;top:75.3px" width="4" height="4" viewBox="0 0 4 4"><path d="M0.3,0.3 L3.7,3.7 M3.7,0.3 L0.3,3.7" stroke="#6e7072" stroke-width="0.7"/></svg>
 <div class="a tr" style="left:149.3px;top:27.3px;color:#bbbbbb;font-size:6px">Variables</div>
 <div class="a" style="left:154.5px;top:38.2px;width:516.5px;height:13.2px;background:#45494a"></div>
 <div class="a" style="left:145.0px;top:43.7px;width:6px;height:0.9px;background:#afb1b3"></div>
 <div class="a" style="left:147.6px;top:41.2px;width:0.9px;height:6px;background:#afb1b3"></div>
 <div class="a" style="left:145.5px;top:56.5px;width:5px;height:0.8px;background:#5a5d5f"></div>
 <div class="a tr mono" style="left:157.5px;top:41.2px;color:#787878;font-size:6.1px">Evaluate expression (Enter) or add a watch (Ctrl+Shift+Enter)</div>
 <div class="a tr" style="left:627px;top:41.5px;color:#787878;font-size:5.8px">Java</div><svg class="a" style="left:638.3px;top:44.6px" width="3" height="2" viewBox="0 0 3 2"><path d="M0,0 H3 L1.5,2Z" fill="#8a8a8a"/></svg>
 <svg class="a" style="left:648.5px;top:41.2px" width="6" height="6" viewBox="0 0 6 6"><path d="M3,0 V6 M0,3 H6" stroke="#5a5d5f" stroke-width="0.8"/></svg>
 <svg class="a" style="left:661.5px;top:43.3px" width="4" height="3" viewBox="0 0 4 3"><path d="M0,0 H4 L2,2.5Z" fill="#afb1b3"/></svg>
 <div class="a" style="left:166.7px;top:52.5px;width:6px;height:6px;border-radius:50%;background:#c75450"></div>
 <div class="a" style="left:169.3px;top:53.7px;width:0.9px;height:2.3px;background:#3c3f41"></div>
 <div class="a" style="left:169.3px;top:56.6px;width:0.9px;height:0.8px;background:#3c3f41"></div>
 <div class="a tr" style="left:175.0px;top:52.0px;color:#bbbbbb"><span style="color:#5394ec">urlConnection</span> = <span style="color:#ff6b68">Cannot find local variable 'urlConnection'</span></div>
 <svg class="a" style="left:159.0px;top:62.8px" width="4" height="5" viewBox="0 0 4 5"><path d="M1,0.5 L3,2.5 L1,4.5" stroke="#9a9da0" stroke-width="0.8" fill="none"/></svg>
 <div class="a" style="left:166.0px;top:62.0px;width:6px;height:6px;border-radius:50%;background:#d6a23c"></div>
 <svg class="a" style="left:166px;top:62px" width="6" height="6" viewBox="0 0 6 6"><path d="M3.9,1.9 Q3.6,1.4 3,1.4 Q2.1,1.4 2.1,2.1 Q2.1,2.7 3,2.9 Q3.9,3.1 3.9,3.8 Q3.9,4.6 3,4.6 Q2.3,4.6 2,4.1" stroke="#3c3f41" stroke-width="0.7" fill="none"/></svg>
 <div class="a tr" style="left:174.0px;top:61.5px;color:#bbbbbb">static <span style="color:#8c8c8c">members of HttpUtils</span></div>
 <svg class="a" style="left:159.0px;top:72.5px" width="4" height="5" viewBox="0 0 4 5"><path d="M1,0.5 L3,2.5 L1,4.5" stroke="#9a9da0" stroke-width="0.8" fill="none"/></svg>
 <div class="a" style="left:166.0px;top:71.5px;width:6px;height:6px;border-radius:50%;background:#d6a23c"></div>
 <svg class="a" style="left:166px;top:71.5px" width="6" height="6" viewBox="0 0 6 6"><path d="M2.3,5 V1.5 H3.2 Q4.1,1.5 4.1,2.4 Q4.1,3.3 3.2,3.3 H2.3" stroke="#3c3f41" stroke-width="0.7" fill="none"/></svg>
 <div class="a tr" style="left:174.0px;top:71.0px;color:#bbbbbb"><span style="color:#5394ec">url</span> = <span style="color:#6a8759">"file:///c:/windows/win.ini"</span></div>
</div>
<!-- BOTTOM TOOLS -->
<div class="a" id="btools">
 <div class="a" style="left:33px;top:0.5px;width:29.6px;height:11px;background:#2f3133"></div>
 <div class="a" style="left:14.8px;top:3px"><svg width="5" height="7" viewBox="0 0 5 7"><path d="M1.5,0.5 V6.5 M1.5,4 Q4,4 4,1" stroke="#afb1b3" stroke-width="0.9" fill="none"/></svg></div>
 <div class="a tb" style="left:22.3px;top:2.0px">Git</div>
 <div class="a" style="left:38px;top:3px"><svg width="6" height="7" viewBox="0 0 6 7"><ellipse cx="3" cy="3.8" rx="2" ry="2.6" fill="#afb1b3"/><circle cx="4.5" cy="5.8" r="1.1" fill="#3ec63e"/></svg></div>
 <div class="a tb" style="left:45.6px;top:2.0px">Debug</div>
 <div class="a" style="left:71.3px;top:3px"><svg width="5" height="6" viewBox="0 0 5 6"><path d="M0.5,0.5 V5.5 M2.5,0.5 V5.5 M4.5,0.5 V5.5" stroke="#afb1b3" stroke-width="0.9"/></svg></div>
 <div class="a tb" style="left:78.3px;top:2.0px">TODO</div>
 <div class="a" style="left:102.6px;top:3px"><svg width="6" height="6" viewBox="0 0 6 6"><circle cx="3" cy="3" r="2.8" fill="#afb1b3"/><path d="M3,1.3 V3.5 M3,4.2 V4.9" stroke="#3c3f41" stroke-width="0.8"/></svg></div>
 <div class="a tb" style="left:109.6px;top:2.0px">Problems</div>
 <div class="a" style="left:141px;top:3px"><svg width="7" height="7" viewBox="0 0 7 7"><circle cx="3" cy="3" r="2.3" fill="none" stroke="#afb1b3" stroke-width="0.9"/><path d="M4.5,4.5 L6.5,6.5" stroke="#afb1b3" stroke-width="1"/></svg></div>
 <div class="a tb" style="left:148.8px;top:2.0px">Profiler</div>
 <div class="a" style="left:175.5px;top:3px"><svg width="6" height="6" viewBox="0 0 6 6"><rect x="0" y="0" width="6" height="6" fill="#afb1b3"/><path d="M1,1.5 L2.3,2.7 L1,3.9 M2.8,4.5 H4.8" stroke="#3c3f41" stroke-width="0.7" fill="none"/></svg></div>
 <div class="a tb" style="left:183.3px;top:2.0px">Terminal</div>
 <div class="a" style="left:211.7px;top:3px"><svg width="6" height="6" viewBox="0 0 6 6"><rect x="3.3" y="0" width="2.4" height="2.4" fill="#afb1b3"/><rect x="0" y="3.5" width="2.4" height="2.4" fill="#afb1b3"/><rect x="3.5" y="3.5" width="2.4" height="2.4" fill="#afb1b3"/></svg></div>
 <div class="a tb" style="left:220px;top:2.0px">Endpoints</div>
 <div class="a" style="left:252.7px;top:3px"><svg width="7" height="6" viewBox="0 0 7 6"><path d="M0.5,2 L2.5,0.3 L3.4,1.2 L1.3,3Z" fill="#afb1b3"/><path d="M2,1.8 L6.3,5.6" stroke="#afb1b3" stroke-width="1.1"/></svg></div>
 <div class="a tb" style="left:260px;top:2.0px">Build</div>
 <div class="a" style="left:283.3px;top:3px"><svg width="6" height="6" viewBox="0 0 6 6"><path d="M3,0.2 L5.8,1.6 V4.4 L3,5.8 L0.2,4.4 V1.6Z" fill="#afb1b3"/><path d="M0.5,1.7 L3,3 L5.5,1.7 M3,3 V5.6" stroke="#3c3f41" stroke-width="0.5" fill="none"/></svg></div>
 <div class="a tb" style="left:290px;top:2.0px">Dependencies</div>
 <div class="a" style="left:332px;top:3px"><svg width="6" height="6" viewBox="0 0 6 6"><path d="M0.5,5.5 Q0,1 5.5,0.5 Q6,5 0.5,5.5Z" fill="#afb1b3"/></svg></div>
 <div class="a tb" style="left:339px;top:2.0px">Spring</div>
 <div class="a" style="left:645.3px;top:3.3px;width:5.5px;height:5.5px;border-radius:50%;background:#c75450"></div>
 <div class="a" style="left:646.7px;top:3.1px;font-size:4.3px;line-height:6px;color:#fff;font-weight:bold">2</div>
 <div class="a tb" style="left:652.4px;top:2.0px">Event Log</div>
</div>
<!-- STATUS BAR -->
<div class="a" id="status">
 <svg class="a" style="left:2.5px;top:0.8px" width="6" height="6" viewBox="0 0 6 6"><rect x="0.5" y="0.5" width="5" height="5" rx="1.3" fill="none" stroke="#afb1b3" stroke-width="0.8"/></svg>
 <div class="a tr" style="left:12.0px;top:-1.5px;color:#bbbbbb">All files are up-to-date (28 minutes ago)</div>
 <div class="a tr" style="left:560.0px;top:-1.5px;color:#bbbbbb">94:1</div>
 <div class="a tr" style="left:577.7px;top:-1.5px;color:#bbbbbb">CRLF</div>
 <div class="a tr" style="left:596.7px;top:-1.5px;color:#bbbbbb">UTF-8</div>
 <div class="a tr" style="left:618.0px;top:-1.5px;color:#bbbbbb">4 spaces</div>
 <svg class="a" style="left:647.5px;top:0.5px" width="5" height="7" viewBox="0 0 5 7"><path d="M1.2,0.5 V6.5 M1.2,4 Q4,4 4,1" stroke="#afb1b3" stroke-width="0.9" fill="none"/></svg>
 <div class="a tr" style="left:655.0px;top:-1.5px;color:#bbbbbb">master</div>
 <svg class="a" style="left:678.0px;top:0.5px" width="6" height="6" viewBox="0 0 6 6"><rect x="0.5" y="2.8" width="4" height="3" fill="#afb1b3"/><path d="M3.5,2.8 V1.5 Q3.5,0.4 4.5,0.4 Q5.5,0.4 5.5,1.5" stroke="#afb1b3" stroke-width="0.7" fill="none"/></svg>
</div>
<!-- WATERMARK -->
<svg class="a" style="left:0;top:340px;pointer-events:none" width="220" height="65" viewBox="0 0 220 65"><text x="16" y="56" font-family="Liberation Sans" font-weight="bold" font-size="58" textLength="188" lengthAdjust="spacingAndGlyphs" fill="#a8c8a8" fill-opacity="0.12">FREEBUF</text></svg>
</body></html>
